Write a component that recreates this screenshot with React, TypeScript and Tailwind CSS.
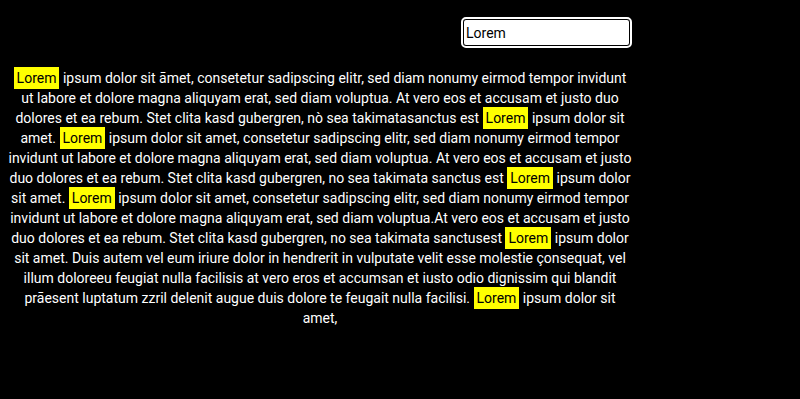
import { useState } from 'react';

const TEXT =
    'Lorem ipsum dolor sit āmet, consetetur sadipscing elitr, sed diam nonumy eirmod tempor invidunt ut labore et dolore magna aliquyam erat, sed diam voluptua. At vero eos et accusam et justo duo dolores et ea rebum. Stet clita kasd gubergren, nò sea takimatasanctus est Lorem ipsum dolor sit amet. Lorem ipsum dolor sit amet, consetetur sadipscing elitr, sed diam nonumy eirmod tempor invidunt ut labore et dolore magna aliquyam erat, sed diam voluptua. At vero eos et accusam et justo duo dolores et ea rebum. Stet clita kasd gubergren, no sea takimata sanctus est Lorem ipsum dolor sit amet. Lorem ipsum dolor sit amet, consetetur sadipscing elitr, sed diam nonumy eirmod tempor invidunt ut labore et dolore magna aliquyam erat, sed diam voluptua.At vero eos et accusam et justo duo dolores et ea rebum. Stet clita kasd gubergren, no sea takimata sanctusest Lorem ipsum dolor sit amet. Duis autem vel eum iriure dolor in hendrerit in vulputate velit esse molestie çonsequat, vel illum doloreeu feugiat nulla facilisis at vero eros et accumsan et iusto odio dignissim qui blandit prāesent luptatum zzril delenit augue duis dolore te feugait nulla facilisi. Lorem ipsum dolor sit amet,';

function Highlighted({ text, query }: { text: string; query: string }) {
    if (!query) return <>{text}</>;
    const parts = text.split(query);
    return (
        <>
            {parts.map((part, i) => (
                <span key={i}>
                    {part}
                    {i < parts.length - 1 && (
                        <mark className="bg-[#ffff00] text-black px-[3px] py-[3px]">{query}</mark>
                    )}
                </span>
            ))}
        </>
    );
}

export default function App() {
    const [query, setQuery] = useState('Lorem');

    return (
        <div className="min-h-[399px] bg-black font-['Roboto',sans-serif]">
            <div className="w-[640px]">
                {/* search */}
                <div className="flex justify-end pt-[19px] pr-[10px]">
                    <input
                        value={query}
                        onChange={(e) => setQuery(e.target.value)}
                        className="w-[167px] h-[27px] px-[2px] bg-white text-black text-[14px] border border-black rounded-[3px] outline-2 outline-white font-['Roboto',sans-serif]"
                    />
                </div>

                {/* text */}
                <p className="mt-[22px] px-2 text-center text-white text-[14px] leading-[20px]">
                    <Highlighted text={TEXT} query={query} />
                </p>
            </div>
        </div>
    );
}
